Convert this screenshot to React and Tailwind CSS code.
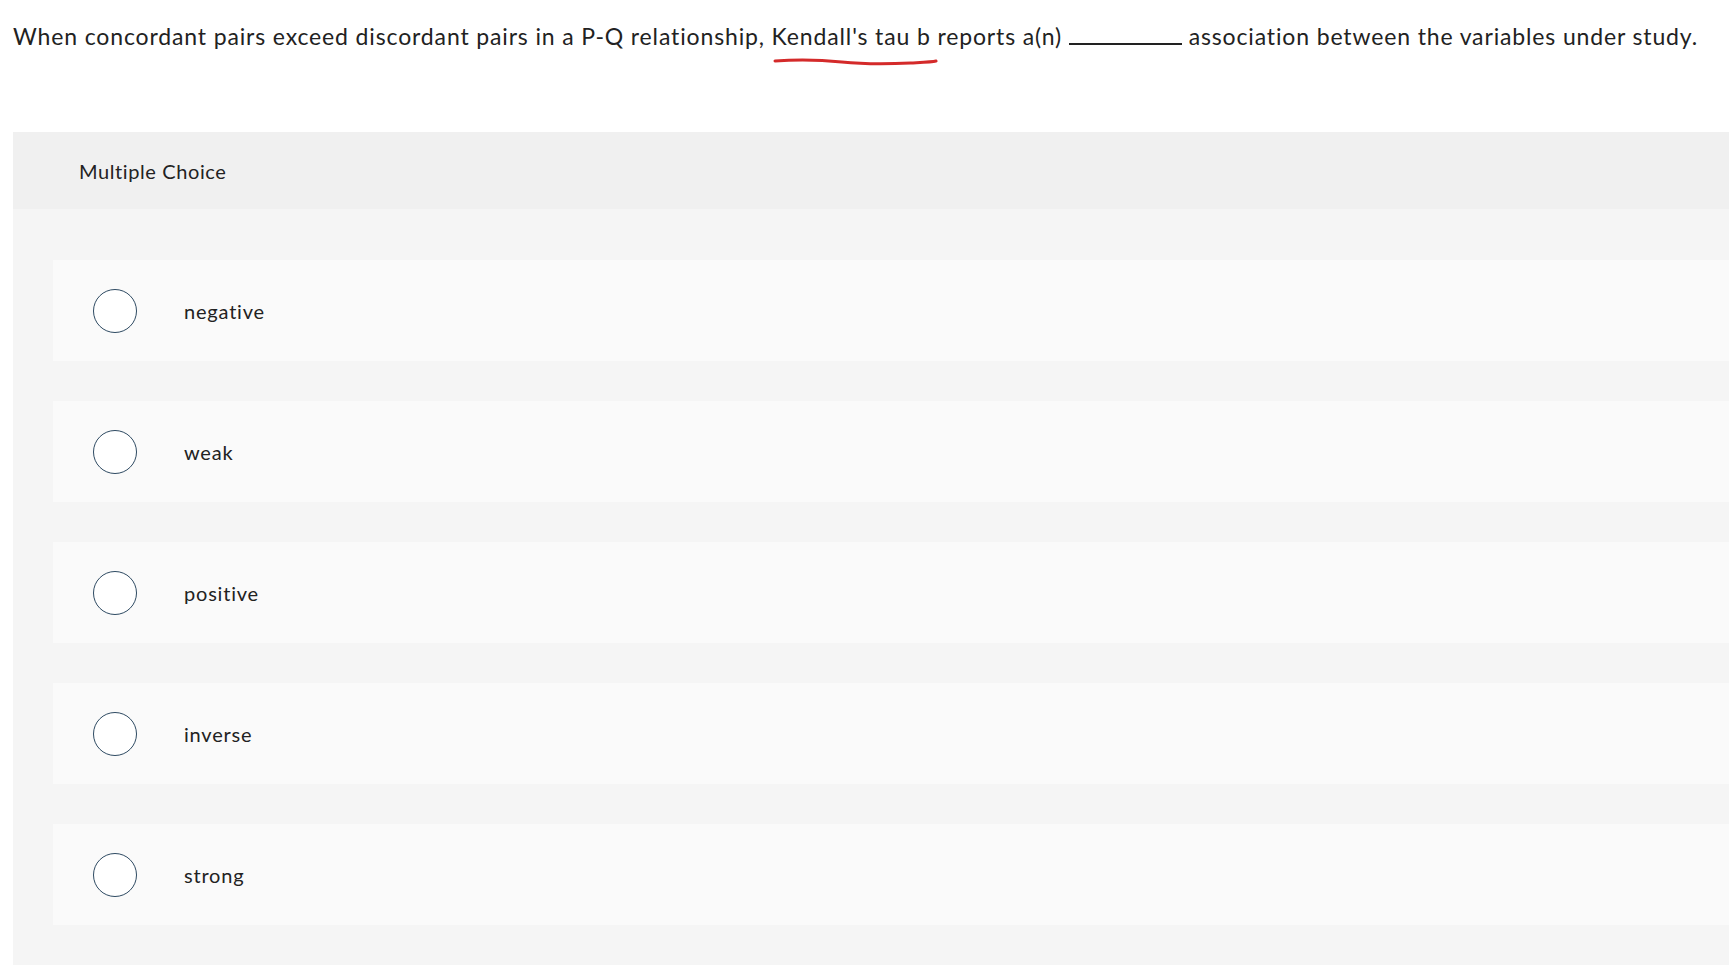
const options = ["negative", "weak", "positive", "inverse", "strong"];

export default function App() {
  return (
    <div className="min-h-screen bg-white overflow-hidden text-[#222]" style={{ fontFamily: "Lato, 'Open Sans', sans-serif" }}>
      <div className="pl-[13px] pt-[20px] text-[23px] leading-[32px] tracking-[0.86px] whitespace-nowrap">
        When concordant pairs exceed discordant pairs in a P-Q relationship,{" "}
        <span className="relative">
          Kendall's tau b
          <svg className="absolute left-[1px] top-[36px] w-[calc(100%+6px)] h-[8px]" viewBox="0 0 168 8" preserveAspectRatio="none">
            <path d="M2 3 C 30 1, 50 2, 70 4 S 120 6, 140 5 S 162 4, 166 3" fill="none" stroke="#d42a2a" strokeWidth="3" strokeLinecap="round" />
          </svg>
        </span>{" "}
        reports a(n){" "}
        <span className="inline-block w-[113px] border-b-2 border-[#222] align-baseline"></span>{" "}
        association between the variables under study.
      </div>

      <div className="ml-[13px] mt-[80px] w-[1800px] bg-[#f5f5f5]">
        <div className="h-[77px] bg-[#f0f0f0] pl-[66px] flex items-center text-[20px] tracking-[0.6px]">
          Multiple Choice
        </div>
        <div className="pt-[51px] pl-[40px] flex flex-col gap-[40px] pb-[40px]">
          {options.map((o) => (
            <div key={o} className="h-[101px] bg-[#fafafa] flex items-center pl-[40px]">
              <span className="w-[44px] h-[44px] rounded-full border border-[#2e4a62] bg-white shrink-0" />
              <span className="ml-[47px] text-[20px] tracking-[0.8px]">{o}</span>
            </div>
          ))}
        </div>
      </div>
    </div>
  );
}
